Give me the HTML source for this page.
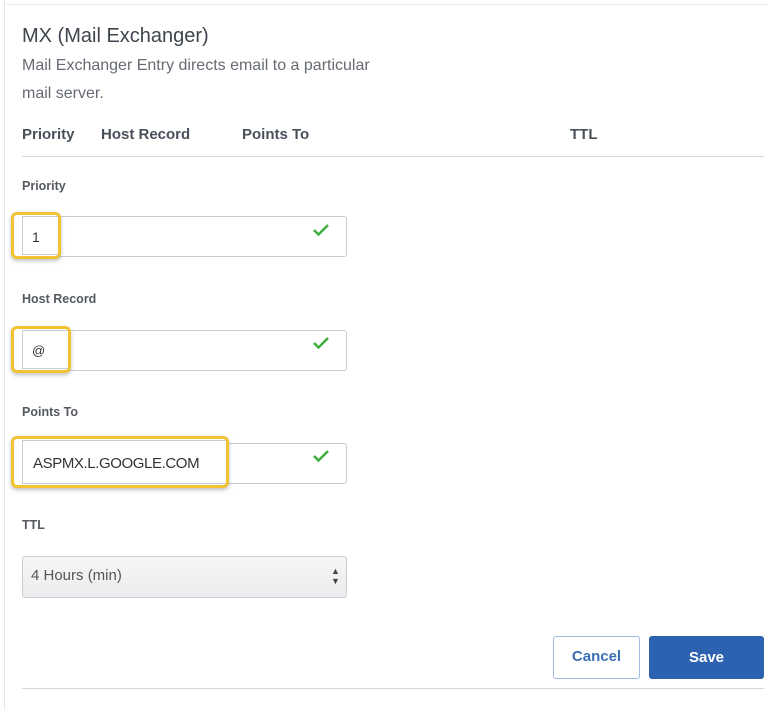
<!DOCTYPE html>
<html><head><style>
body{margin:0;width:768px;height:710px;background:#fff;font-family:"Liberation Sans",sans-serif;position:relative;overflow:hidden;color:#4a4f57}
.a{position:absolute}
.lbl{font-size:12.5px;font-weight:bold;color:#555a62}
.inp{position:absolute;left:22px;width:325px;height:41px;border:1px solid #c9ccd2;border-radius:3px;box-sizing:border-box;background:#fff}
.hl{position:absolute;border:3px solid #f2c230;border-radius:6px;box-sizing:border-box;background:#fff;box-shadow:0 2px 4px rgba(0,0,0,.25)}
.hl i{position:absolute;left:8px;top:1px;right:0;bottom:1px;border:1px solid #c9ccd2;border-right:none}
.hl span{position:absolute;left:18px;top:14px;font-size:14px;color:#333}
.chk{position:absolute;left:312px;width:18px;height:14px}
</style></head><body>
<div class="a" style="left:4px;top:0;width:1px;height:710px;background:#e4e6ea"></div>
<div class="a" style="left:4px;top:4px;width:764px;height:1px;background:#eceef1"></div>
<div class="a" style="left:22px;top:25px;font-size:20px;color:#3f454e">MX (Mail Exchanger)</div>
<div class="a" style="left:22px;top:52px;font-size:16px;line-height:28px;color:#666b73;width:400px">Mail Exchanger Entry directs email to a particular<br>mail server.</div>
<div class="a" style="left:22px;top:126px;font-size:15px;font-weight:bold;color:#4a505a">Priority</div>
<div class="a" style="left:101px;top:126px;font-size:15px;font-weight:bold;color:#4a505a">Host Record</div>
<div class="a" style="left:242px;top:126px;font-size:15px;font-weight:bold;color:#4a505a">Points To</div>
<div class="a" style="left:570px;top:126px;font-size:15px;font-weight:bold;color:#4a505a">TTL</div>
<div class="a" style="left:22px;top:156px;width:742px;height:1px;background:#d5d8dd"></div>

<div class="a lbl" style="left:22px;top:179px">Priority</div>
<div class="inp" style="top:216px"></div>
<svg class="chk" style="top:223px" viewBox="0 0 18 14"><path d="M2 7l4.5 4.5L16 2" fill="none" stroke="#3fae3f" stroke-width="2.5"/></svg>
<div class="hl" style="left:11px;top:212px;width:50px;height:47px"><i></i><span>1</span></div>

<div class="a lbl" style="left:22px;top:292px">Host Record</div>
<div class="inp" style="top:330px"></div>
<svg class="chk" style="top:336px" viewBox="0 0 18 14"><path d="M2 7l4.5 4.5L16 2" fill="none" stroke="#3fae3f" stroke-width="2.5"/></svg>
<div class="hl" style="left:11px;top:326px;width:60px;height:47px"><i></i><span style="font-size:13px">@</span></div>

<div class="a lbl" style="left:22px;top:405px">Points To</div>
<div class="inp" style="top:443px"></div>
<svg class="chk" style="top:449px" viewBox="0 0 18 14"><path d="M2 7l4.5 4.5L16 2" fill="none" stroke="#3fae3f" stroke-width="2.5"/></svg>
<div class="hl" style="left:11px;top:436px;width:218px;height:52px"><i></i><span style="top:16px;left:19px;font-size:15px;letter-spacing:-0.4px">ASPMX.L.GOOGLE.COM</span></div>

<div class="a lbl" style="left:22px;top:518px">TTL</div>
<div class="inp" style="top:556px;height:42px;background:linear-gradient(#f6f6f7,#ececee)"></div>
<div class="a" style="left:31px;top:567px;font-size:15px;color:#555">4 Hours (min)</div>
<div class="a" style="left:331px;top:566px;font-size:9px;line-height:10px;color:#444">▲<br>▼</div>

<div class="a" style="left:553px;top:636px;width:87px;height:43px;border:1.5px solid #9fbbe0;border-radius:3px;box-sizing:border-box;color:#3a6fb7;font-size:15px;font-weight:bold;text-align:center;line-height:40px">Cancel</div>
<div class="a" style="left:649px;top:636px;width:115px;height:43px;background:#2c62b0;border-radius:3px;color:#fff;font-size:15px;font-weight:bold;text-align:center;line-height:43px">Save</div>
<div class="a" style="left:22px;top:688px;width:742px;height:1px;background:#d5d8dd"></div>
</body></html>
